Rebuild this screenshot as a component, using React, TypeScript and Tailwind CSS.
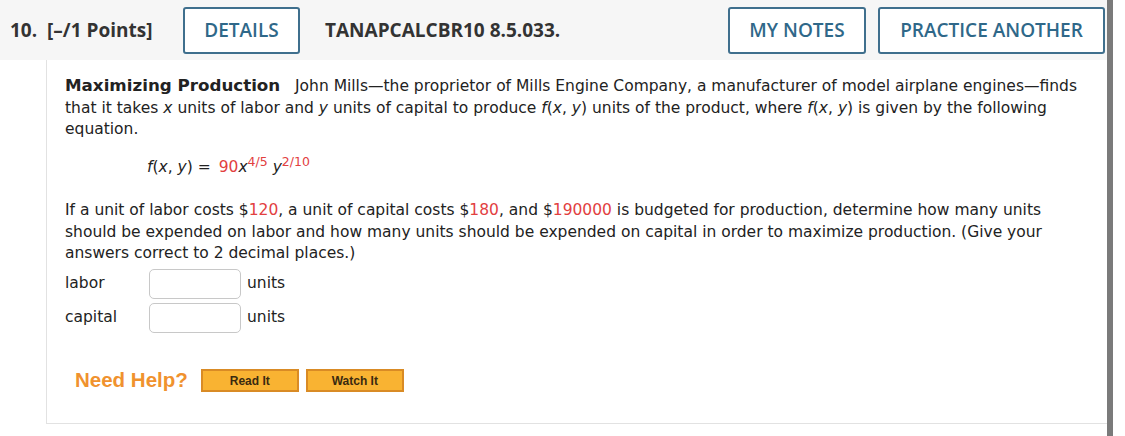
export default function App() {
  const red = "text-[#e2403f]";
  const btn =
    "h-[47px] border-2 border-[#3f6f8d] rounded-[3px] bg-white text-[#2f6889] text-[19px] font-semibold";
  const sup = `${red} relative -top-[6px] text-[12.5px] leading-none`;
  return (
    <div className="w-[1125px] h-[436px] bg-white flex overflow-hidden">
      <div className="w-[1107px] flex flex-col">
        {/* header */}
        <div className="h-[60px] bg-[#f6f6f6] flex items-center pl-[10px] pr-[2px] [font-family:'Open_Sans',sans-serif] text-[#333]">
          <span className="font-bold text-[19px] w-[173px] whitespace-nowrap">10.&nbsp; [–/1 Points]</span>
          <button className={`${btn} w-[117px]`}>DETAILS</button>
          <span className="ml-[25px] font-bold text-[19px]">TANAPCALCBR10 8.5.033.</span>
          <div className="flex-1" />
          <button className={`${btn} w-[138px]`}>MY NOTES</button>
          <button className={`${btn} ml-[12px] w-[227px]`}>PRACTICE ANOTHER</button>
        </div>

        {/* content */}
        <div className="ml-[46px] h-[364px] border-l border-b border-[#e2e2e2] pl-[18px] pr-[10px] pt-[15px] [font-family:'DejaVu_Sans',Verdana,sans-serif] text-[15.5px] leading-[21.5px] text-[#222]">
          <p>
            <b className="text-[16.7px]">Maximizing Production</b>
            &nbsp;&nbsp; John Mills—the proprietor of Mills Engine Company, a manufacturer of model airplane engines—finds that it takes <i>x</i> units of labor and <i>y</i> units of capital to produce <i>f</i>(<i>x</i>, <i>y</i>) units of the product, where <i>f</i>(<i>x</i>, <i>y</i>) is given by the following equation.
          </p>
          <p className="mt-[16px] ml-[82px] h-[21.5px] whitespace-nowrap">
            <i>f</i>(<i>x</i>, <i>y</i>) <span className="mr-[3px]">=</span> <span className={red}>90</span><i>x</i>
            <span className={sup}>4/5</span> <i>y</i>
            <span className={sup}>2/10</span>
          </p>
          <p className="mt-[22px]">
            If a unit of labor costs $<span className={red}>120</span>, a unit of capital costs $<span className={red}>180</span>, and $<span className={red}>190000</span> is budgeted for production, determine how many units should be expended on labor and how many units should be expended on capital in order to maximize production. (Give your answers correct to 2 decimal places.)
          </p>
          <div className="mt-[4px] flex flex-col gap-[4px]">
            {["labor", "capital"].map((l) => (
              <div key={l} className="flex items-center h-[30px]">
                <span className="w-[84px]">{l}</span>
                <input className="w-[92px] h-[30px] border border-[#c8c8c8] rounded-[5px] bg-white" />
                <span className="ml-[6px]">units</span>
              </div>
            ))}
          </div>
          <div className="mt-[36px] ml-[10px] flex items-center [font-family:'Liberation_Sans',Arial,sans-serif]">
            <span className="text-[#f0922e] font-bold text-[20.5px] mr-[13px]">Need Help?</span>
            <button className="w-[98px] h-[23px] bg-[#f9b332] border-2 border-[#d98b25] text-[12px] font-bold text-[#3a2a10]">
              Read It
            </button>
            <button className="ml-[7px] w-[98px] h-[23px] bg-[#f9b332] border-2 border-[#d98b25] text-[12px] font-bold text-[#3a2a10]">
              Watch It
            </button>
          </div>
        </div>
      </div>
      <div className="w-[6px] bg-[#7a7a7a]" />
      <div className="flex-1 bg-white" />
    </div>
  );
}
